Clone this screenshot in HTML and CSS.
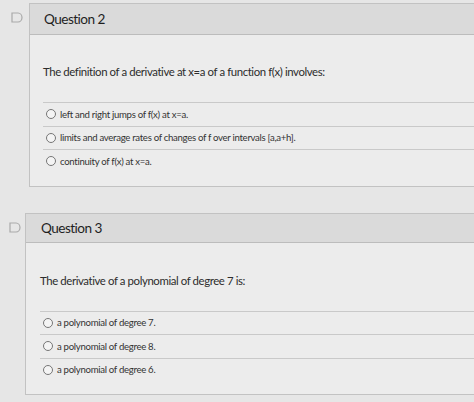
FILE: index.html
```html
<!DOCTYPE html>
<html>
<head>
<meta charset="utf-8">
<link rel="stylesheet" href="styles.css">
</head>
<body>
<div class="page">
  <div class="question q2">
    <div class="gutter">
      <svg class="flag" width="12" height="11" viewBox="0 0 12 11"><path d="M1 1 H7 A4 4.5 0 0 1 7 10 H1 Z" fill="none" stroke="#a9a9a9" stroke-width="1.2"/></svg>
    </div>
    <div class="card">
      <div class="card-header">Question 2</div>
      <div class="card-body">
        <div class="qtext">The definition of a derivative at x=a of a function f(x) involves:</div>
        <div class="answers">
          <div class="answer"><span class="radio"></span><span>left and right jumps of f(x) at x=a.</span></div>
          <div class="answer"><span class="radio"></span><span>limits and average rates of changes of f over intervals [a,a+h].</span></div>
          <div class="answer"><span class="radio"></span><span>continuity of f(x) at x=a.</span></div>
        </div>
      </div>
    </div>
  </div>
  <div class="question q3">
    <div class="gutter">
      <svg class="flag" width="12" height="11" viewBox="0 0 12 11"><path d="M1 1 H7 A4 4.5 0 0 1 7 10 H1 Z" fill="none" stroke="#a9a9a9" stroke-width="1.2"/></svg>
    </div>
    <div class="card">
      <div class="card-header">Question 3</div>
      <div class="card-body">
        <div class="qtext">The derivative of a polynomial of degree 7 is:</div>
        <div class="answers">
          <div class="answer"><span class="radio"></span><span>a polynomial of degree 7.</span></div>
          <div class="answer"><span class="radio"></span><span>a polynomial of degree 8.</span></div>
          <div class="answer"><span class="radio"></span><span>a polynomial of degree 6.</span></div>
        </div>
      </div>
    </div>
  </div>
</div>
</body>
</html>
```
FILE: styles.css
```css
html, body {
  margin: 0;
  padding: 0;
  background: #e6e6e6;
  font-family: Lato, "Liberation Sans", sans-serif;
  color: #2e2e2e;
  overflow: hidden;
}
.page {
  padding-top: 3px;
  display: flex;
  flex-direction: column;
  gap: 26px;
}
.question {
  display: flex;
}
.gutter {
  flex: none;
  display: flex;
  justify-content: flex-end;
  align-items: flex-start;
}
.q2 .gutter { width: 29px; }
.q3 .gutter { width: 25px; }
.flag {
  margin-top: 9px;
  margin-right: 6px;
}
.q3 .flag { margin-right: 4px; margin-top: 9px; }
.card {
  flex: 1;
  border: 1px solid #c2c2c2;
  border-right: none;
  background: #ececec;
}
.card-header {
  height: 30px;
  background: #dadada;
  border-bottom: 1px solid #bcbcbc;
  display: flex;
  align-items: center;
  padding-left: 14px;
  font-size: 13.6px;
  letter-spacing: -0.55px;
  color: #1f1f1f;
}
.q3 .card-header { height: 28px; padding-left: 15px; }
.card-body {
  padding: 28px 0 13px 13px;
}
.q3 .card-body { padding-top: 29px; padding-left: 14px; }
.qtext {
  font-size: 11.4px;
  letter-spacing: -0.4px;
  line-height: 18px;
  color: #2c2c2c;
}
.answers {
  margin-top: 21px;
}
.answer {
  height: 23.5px;
  box-sizing: border-box;
  border-top: 1px solid #c9c9c9;
  display: flex;
  align-items: center;
  gap: 4px;
  padding-left: 3px;
  font-size: 9.6px;
  letter-spacing: -0.3px;
  color: #333;
}
.radio {
  width: 8px;
  height: 8px;
  border: 1px solid #767676;
  border-radius: 50%;
  background: #f4f4f4;
  flex: none;
}
```
